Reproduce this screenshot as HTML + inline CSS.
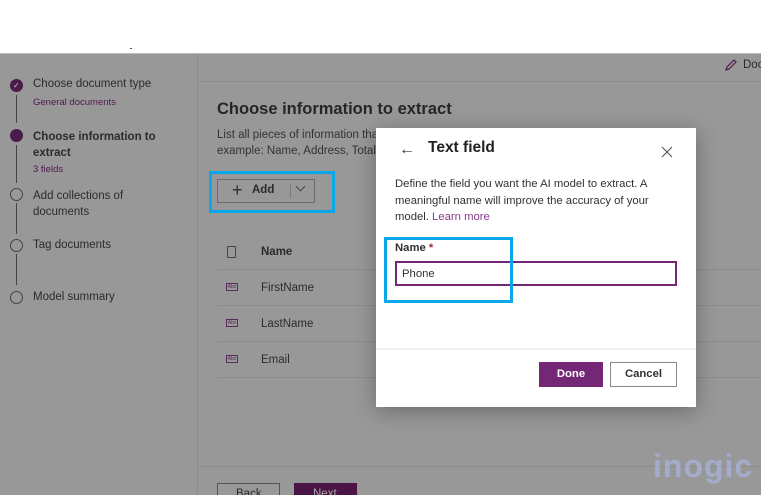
<!DOCTYPE html>
<html><head><style>
*{margin:0;padding:0;box-sizing:border-box}
body{width:768px;height:499px;background:#fff;position:relative;overflow:hidden;font-family:"Liberation Sans",sans-serif;}
.a{position:absolute}
.g{left:0;top:53px;width:761px;height:442px;background:#989898;border-top:1px solid #bdbdbd}
.t{color:#2b2b2b;font-size:11.5px;white-space:nowrap}
.p{color:#4e1a4e}
.hl{border:3px solid #0aa8e8}
.ln{height:1px;background:#8c8c8c}
.abc{width:12px;height:8px;border:1px solid #5a2a5a;font-size:5px;color:#5a2a5a;text-align:center;line-height:6px}
.w{color:#323130}
</style></head><body>
<div class="a" style="left:130px;top:48px;width:2px;height:1px;background:#555"></div>
<div class="a g"></div>
<div class="a" style="left:197px;top:54px;width:1px;height:441px;background:#8d8d8d"></div>
<div class="a ln" style="left:198px;top:81px;width:563px"></div>
<div class="a" style="left:10px;top:79px;width:13px;height:13px;border-radius:50%;background:#4a1a4a"></div>
<div class="a" style="left:13px;top:81px;color:#ccc;font-size:8px">✓</div>
<div class="a" style="left:16px;top:95px;width:1px;height:28px;background:#444"></div>
<div class="a" style="left:10px;top:129px;width:13px;height:13px;border-radius:50%;background:#4a1a4a"></div>
<div class="a" style="left:16px;top:145px;width:1px;height:38px;background:#444"></div>
<div class="a" style="left:10px;top:188px;width:13px;height:13px;border-radius:50%;border:1.5px solid #444"></div>
<div class="a" style="left:16px;top:203px;width:1px;height:31px;background:#444"></div>
<div class="a" style="left:10px;top:239px;width:13px;height:13px;border-radius:50%;border:1.5px solid #444"></div>
<div class="a" style="left:16px;top:254px;width:1px;height:31px;background:#444"></div>
<div class="a" style="left:10px;top:291px;width:13px;height:13px;border-radius:50%;border:1.5px solid #444"></div>
<div class="a t" style="left:33px;top:78px">Choose document type</div>
<div class="a t p" style="left:33px;top:97px;font-size:9.5px">General documents</div>
<div class="a t" style="left:33px;top:129px;font-weight:bold;line-height:16px">Choose information to<br>extract</div>
<div class="a t p" style="left:33px;top:164px;font-size:9.5px">3 fields</div>
<div class="a t" style="left:33px;top:188px;line-height:16px">Add collections of<br>documents</div>
<div class="a t" style="left:33px;top:239px">Tag documents</div>
<div class="a t" style="left:33px;top:291px">Model summary</div>
<svg class="a" style="left:724px;top:58px" width="14" height="14" viewBox="0 0 14 14"><path d="M2 12 L3 9 L10 2 L12 4 L5 11 Z" fill="none" stroke="#4e1a4e" stroke-width="1.2"/></svg>
<div class="a t" style="left:743px;top:59px">Doc</div>
<div class="a" style="left:217px;top:100px;font-size:16.5px;font-weight:bold;color:#262626">Choose information to extract</div>
<div class="a t" style="left:217px;top:127px;color:#333;line-height:16px">List all pieces of information that<br>example: Name, Address, Total a</div>
<div class="a" style="left:217px;top:179px;width:98px;height:24px;border:1px solid #6a6a6a"></div>
<div class="a" style="left:232px;top:180px;font-size:18px;color:#2b2b2b">+</div>
<div class="a t" style="left:252px;top:184px;font-weight:bold">Add</div>
<div class="a" style="left:290px;top:184px;width:1px;height:14px;background:#7a7a7a"></div>
<div class="a" style="left:297px;top:183px;width:7px;height:7px;border-right:1px solid #444;border-bottom:1px solid #444;transform:rotate(45deg)"></div>
<div class="a hl" style="left:209px;top:171px;width:126px;height:42px"></div>
<div class="a" style="left:227px;top:246px;width:9px;height:12px;border:1px solid #444;border-radius:1px"></div>
<div class="a t" style="left:261px;top:246px;font-weight:bold">Name</div>
<div class="a ln" style="left:217px;top:269px;width:544px"></div>
<div class="a abc" style="left:226px;top:283px">Abc</div>
<div class="a t" style="left:261px;top:282px">FirstName</div>
<div class="a ln" style="left:217px;top:305px;width:544px"></div>
<div class="a abc" style="left:226px;top:319px">Abc</div>
<div class="a t" style="left:261px;top:318px">LastName</div>
<div class="a ln" style="left:217px;top:341px;width:544px"></div>
<div class="a abc" style="left:226px;top:355px">Abc</div>
<div class="a t" style="left:261px;top:354px">Email</div>
<div class="a ln" style="left:217px;top:377px;width:544px"></div>
<div class="a ln" style="left:198px;top:466px;width:563px"></div>
<div class="a" style="left:217px;top:483px;width:63px;height:14px;border:1px solid #555;border-bottom:none"></div>
<div class="a t" style="left:236px;top:488px">Back</div>
<div class="a" style="left:294px;top:483px;width:63px;height:12px;background:#4a1545"></div>
<div class="a t" style="left:313px;top:488px;color:#aaa">Next</div>
<div class="a" style="left:653px;top:448px;font-size:32px;font-weight:bold;color:#a4accb;letter-spacing:1px">inogic</div>
<div class="a" style="left:0;top:495px;width:768px;height:4px;background:#fff"></div>
<div class="a" style="left:761px;top:53px;width:7px;height:446px;background:#fff"></div>
<div class="a" style="left:376px;top:128px;width:320px;height:279px;background:#fff;box-shadow:0 4px 20px rgba(0,0,0,.3)"></div>
<div class="a" style="left:399px;top:141px;font-size:16px;color:#333">←</div>
<div class="a" style="left:428px;top:139px;font-size:15.5px;font-weight:bold;color:#222">Text field</div>
<svg class="a" style="left:661px;top:146px" width="12" height="12" viewBox="0 0 12 12"><path d="M1 1 L11 11 M11 1 L1 11" stroke="#555" stroke-width="1.1"/></svg>
<div class="a w" style="left:395px;top:176px;font-size:11.3px;line-height:16.5px;width:285px">Define the field you want the AI model to extract. A meaningful name will improve the accuracy of your model. <span style="color:#8a3b8a">Learn more</span></div>
<div class="a w" style="left:395px;top:242px;font-size:11.3px;font-weight:bold">Name <span style="color:#a4262c">*</span></div>
<div class="a" style="left:395px;top:261px;width:282px;height:25px;border:2px solid #742774"></div>
<div class="a w" style="left:402px;top:268px;font-size:11.3px">Phone</div>
<div class="a hl" style="left:384px;top:237px;width:129px;height:66px"></div>
<div class="a" style="left:376px;top:348px;width:320px;height:2px;background:#f0f0f0"></div>
<div class="a" style="left:539px;top:362px;width:64px;height:25px;background:#742774;color:#fff;font-size:11.3px;font-weight:bold;text-align:center;line-height:25px">Done</div>
<div class="a" style="left:610px;top:362px;width:67px;height:25px;border:1px solid #8a8886;color:#323130;font-size:11.3px;font-weight:bold;text-align:center;line-height:23px">Cancel</div>
</body></html>
